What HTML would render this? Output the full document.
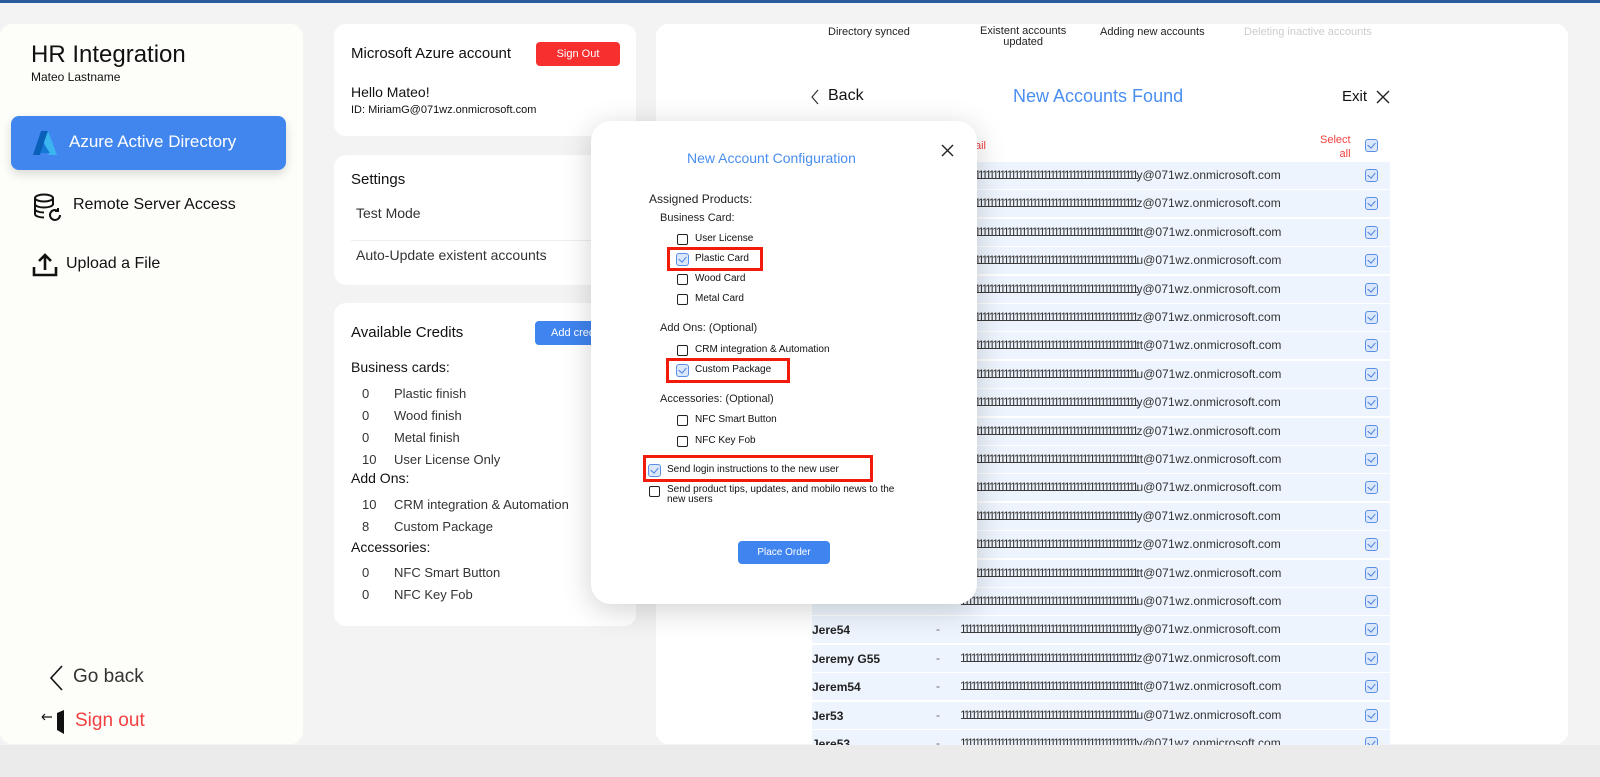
<!DOCTYPE html>
<html><head><meta charset="utf-8"><style>
*{box-sizing:border-box;margin:0;padding:0}
body{width:1600px;height:777px;overflow:hidden;background:#f3f3f3;font-family:"Liberation Sans",sans-serif;color:#111;position:relative}
.topline{position:absolute;left:0;top:0;width:1600px;height:3px;background:#2b5b9c}
.panel{position:absolute;background:#fff;border-radius:12px}
.abs{position:absolute;white-space:nowrap}
.cb{position:absolute;width:11px;height:11px;border:1.5px solid #222;border-radius:2px;background:#fff}
.cbc{position:absolute;width:13px;height:13px;border:1.5px solid #5b8fe6;border-radius:3px;background:#dbe7fb}
.cbc:after{content:"";position:absolute;left:3px;top:1px;width:4px;height:6px;border:solid #4a80e0;border-width:0 1.5px 1.5px 0;transform:rotate(40deg)}
.red{position:absolute;border:3px solid #f21a0a}
.row{position:absolute;left:812px;width:578px;height:27px;background:#edf4fd;font-size:12px;color:#333}
</style></head><body>
<div class="topline"></div>

<div class="panel" style="left:0;top:24px;width:303px;height:720px;background:#fdfdf9"></div>
<div class="abs" style="left:31px;top:41px;font-size:24px;color:#111">HR Integration</div>
<div class="abs" style="left:31px;top:70px;font-size:12px">Mateo Lastname</div>
<div class="abs" style="left:11px;top:116px;width:275px;height:54px;background:#4186ef;border-radius:8px;box-shadow:0 4px 10px rgba(0,0,0,.15)"></div>
<svg class="abs" style="left:32px;top:130px" width="26" height="26" viewBox="0 0 26 26"><path d="M9 1h7L8 25H1z" fill="#0a5fb8"/><path d="M16 1l9 24h-8L12 12z" fill="#3ab5ef"/><path d="M12 14l6 9H8z" fill="#1478d4"/></svg>
<div class="abs" style="left:69px;top:132px;font-size:17px;color:#fff">Azure Active Directory</div>
<svg class="abs" style="left:32px;top:193px" width="32" height="30" viewBox="0 0 32 30" fill="none" stroke="#111" stroke-width="2"><ellipse cx="12" cy="5" rx="9" ry="3.5"/><path d="M3 5v16c0 2 4 3.5 9 3.5M21 5v7M3 11c0 2 4 3.5 9 3.5s9-1.5 9-3.5M3 16c0 2 4 3.5 9 3.5"/><path d="M28 22a5 5 0 1 1-2-4M26 15v3h-3"/></svg>
<div class="abs" style="left:73px;top:196px;font-size:16px">Remote Server Access</div>
<svg class="abs" style="left:32px;top:252px" width="26" height="26" viewBox="0 0 26 26" fill="none" stroke="#111" stroke-width="2.6"><path d="M2 15v8h22v-8M13 18V3M7 9l6-6 6 6"/></svg>
<div class="abs" style="left:66px;top:255px;font-size:16px">Upload a File</div>
<svg class="abs" style="left:48px;top:664px" width="16" height="28" viewBox="0 0 16 28" fill="none" stroke="#111" stroke-width="1.6"><path d="M14 2L3 14l11 12"/></svg>
<div class="abs" style="left:73px;top:666px;font-size:19px;color:#333;font-weight:300">Go back</div>
<svg class="abs" style="left:41px;top:707px" width="26" height="28" viewBox="0 0 26 28"><path d="M1 10h10M1 10l3-3M1 10l3 3" stroke="#111" stroke-width="1.2" fill="none"/><path d="M16 6l7-3v24l-7-4z" fill="#111"/></svg>
<div class="abs" style="left:75px;top:710px;font-size:19px;color:#f24040;font-weight:300">Sign out</div>

<div class="panel" style="left:334px;top:24px;width:302px;height:112px"></div>
<div class="abs" style="left:351px;top:45px;font-size:15px">Microsoft Azure account</div>
<div class="abs" style="left:536px;top:42px;width:84px;height:24px;background:#f82f2f;border-radius:4px;color:#fff;font-size:11px;text-align:center;line-height:24px">Sign Out</div>
<div class="abs" style="left:351px;top:84px;font-size:14px">Hello Mateo!</div>
<div class="abs" style="left:351px;top:104px;font-size:11px">ID: MiriamG@071wz.onmicrosoft.com</div>

<div class="panel" style="left:334px;top:155px;width:302px;height:130px"></div>
<div class="abs" style="left:351px;top:171px;font-size:15px">Settings</div>
<div class="abs" style="left:356px;top:205px;font-size:14px;color:#333">Test Mode</div>
<div class="abs" style="left:351px;top:240px;width:250px;height:1px;background:#eee"></div>
<div class="abs" style="left:356px;top:247px;font-size:14px;color:#333">Auto-Update existent accounts</div>

<div class="panel" style="left:334px;top:303px;width:302px;height:323px"></div>
<div class="abs" style="left:351px;top:324px;font-size:15px">Available Credits</div>
<div class="abs" style="left:535px;top:321px;width:70px;height:24px;background:#3f84ef;border-radius:4px;color:#fff;font-size:11px;line-height:24px;padding-left:16px;overflow:hidden">Add credits</div>
<div class="abs" style="left:351px;top:359px;font-size:14px">Business cards:</div>
<div class="abs" style="left:362px;top:383px;font-size:13px;color:#333;line-height:22px">0<br>0<br>0<br>10</div>
<div class="abs" style="left:394px;top:383px;font-size:13px;color:#333;line-height:22px">Plastic finish<br>Wood finish<br>Metal finish<br>User License Only</div>
<div class="abs" style="left:351px;top:470px;font-size:14px">Add Ons:</div>
<div class="abs" style="left:362px;top:494px;font-size:13px;color:#333;line-height:22px">10<br>8</div>
<div class="abs" style="left:394px;top:494px;font-size:13px;color:#333;line-height:22px">CRM integration &amp; Automation<br>Custom Package</div>
<div class="abs" style="left:351px;top:539px;font-size:14px">Accessories:</div>
<div class="abs" style="left:362px;top:562px;font-size:13px;color:#333;line-height:22px">0<br>0</div>
<div class="abs" style="left:394px;top:562px;font-size:13px;color:#333;line-height:22px">NFC Smart Button<br>NFC Key Fob</div>

<div class="panel" style="left:656px;top:24px;width:912px;height:720px"></div>
<div class="abs" style="left:828px;top:26px;font-size:11px;color:#222">Directory synced</div>
<div class="abs" style="left:980px;top:26px;font-size:11px;color:#222;text-align:center;line-height:11px">Existent accounts<br>updated</div>
<div class="abs" style="left:1100px;top:26px;font-size:11px;color:#222">Adding new accounts</div>
<div class="abs" style="left:1244px;top:26px;font-size:11px;color:#ccc">Deleting inactive accounts</div>
<svg class="abs" style="left:810px;top:89px" width="10" height="16" viewBox="0 0 10 16" fill="none" stroke="#333" stroke-width="1.2"><path d="M8 1L2 8l6 7"/></svg>
<div class="abs" style="left:828px;top:87px;font-size:16px">Back</div>
<div class="abs" style="left:1013px;top:86px;font-size:18px;color:#4a8ef0">New Accounts Found</div>
<div class="abs" style="left:1342px;top:88px;font-size:15px">Exit</div>
<svg class="abs" style="left:1376px;top:90px" width="14" height="14" viewBox="0 0 14 14" stroke="#222" stroke-width="1.4"><path d="M1 1l12 12M13 1L1 13"/></svg>
<div class="abs" style="left:975px;top:140px;font-size:11px;color:#f24040">ail</div>
<div class="abs" style="left:1320px;top:133px;font-size:11px;color:#f24040;text-align:right;line-height:14px">Select<br>&nbsp;&nbsp;&nbsp;all</div>
<div class="cbc" style="left:1365px;top:139px"></div>

<div id="rows"></div>
<script>
var ends=["y","z","tt","u","y","z","tt","u","y","z","tt","u","y","z","tt","u","y","z","tt","u","y"];
var names={16:"Jere54",17:"Jeremy G55",18:"Jerem54",19:"Jer53",20:"Jere53"};
var ones="1111111111111111111111111111111111111111111111111";
var h="";
for(var i=0;i<21;i++){var t=162+i*28.4;
h+='<div class="row" style="top:'+t+'px"><div class="abs" style="left:0;top:7px;font-weight:bold;color:#222">'+(names[i]||"")+'</div>'+(names[i]?'<div class="abs" style="left:124px;top:6px;color:#666">-</div>':'')+'<div class="abs" style="left:148px;top:6px;letter-spacing:-2.2px">'+ones+'<span style="letter-spacing:0">'+ends[i]+'@071wz.onmicrosoft.com</span></div><div class="cbc" style="left:553px;top:7px"></div></div>';}
document.getElementById("rows").innerHTML=h;
</script>
<div class="abs" style="left:0;top:745px;width:1600px;height:32px;background:#ebebeb"></div>

<div class="abs" style="left:591px;top:121px;width:386px;height:483px;background:#fff;border-radius:20px;box-shadow:0 6px 30px rgba(0,0,0,.18)"></div>
<div class="abs" style="left:687px;top:150px;font-size:14px;color:#4a8ef0">New Account Configuration</div>
<svg class="abs" style="left:941px;top:144px" width="13" height="13" viewBox="0 0 13 13" stroke="#222" stroke-width="1.4"><path d="M1 1l11 11M12 1L1 12"/></svg>
<div class="abs" style="left:649px;top:192px;font-size:12px;color:#222">Assigned Products:</div>
<div class="abs" style="left:660px;top:212px;font-size:11px;color:#222">Business Card:</div>
<div class="cb" style="left:677px;top:234px"></div><div class="abs" style="left:695px;top:233px;font-size:10px">User License</div>
<div class="cbc" style="left:676px;top:253px"></div><div class="abs" style="left:695px;top:253px;font-size:10px">Plastic Card</div>
<div class="red" style="left:667px;top:247px;width:96px;height:24px"></div>
<div class="cb" style="left:677px;top:274px"></div><div class="abs" style="left:695px;top:273px;font-size:10px">Wood Card</div>
<div class="cb" style="left:677px;top:294px"></div><div class="abs" style="left:695px;top:293px;font-size:10px">Metal Card</div>
<div class="abs" style="left:660px;top:322px;font-size:11px;color:#222">Add Ons: (Optional)</div>
<div class="cb" style="left:677px;top:345px"></div><div class="abs" style="left:695px;top:344px;font-size:10px">CRM integration &amp; Automation</div>
<div class="cbc" style="left:676px;top:364px"></div><div class="abs" style="left:695px;top:364px;font-size:10px">Custom Package</div>
<div class="red" style="left:666px;top:358px;width:124px;height:25px"></div>
<div class="abs" style="left:660px;top:393px;font-size:11px;color:#222">Accessories: (Optional)</div>
<div class="cb" style="left:677px;top:415px"></div><div class="abs" style="left:695px;top:414px;font-size:10px">NFC Smart Button</div>
<div class="cb" style="left:677px;top:436px"></div><div class="abs" style="left:695px;top:435px;font-size:10px">NFC Key Fob</div>
<div class="cbc" style="left:648px;top:464px"></div><div class="abs" style="left:667px;top:464px;font-size:10px">Send login instructions to the new user</div>
<div class="red" style="left:643px;top:455px;width:230px;height:27px"></div>
<div class="cb" style="left:649px;top:486px"></div><div class="abs" style="left:667px;top:485px;font-size:10px;line-height:10px">Send product tips, updates, and mobilo news to the<br>new users</div>
<div class="abs" style="left:738px;top:541px;width:92px;height:23px;background:#3f84ef;border-radius:4px;color:#fff;font-size:10px;text-align:center;line-height:23px">Place Order</div>
</body></html>
